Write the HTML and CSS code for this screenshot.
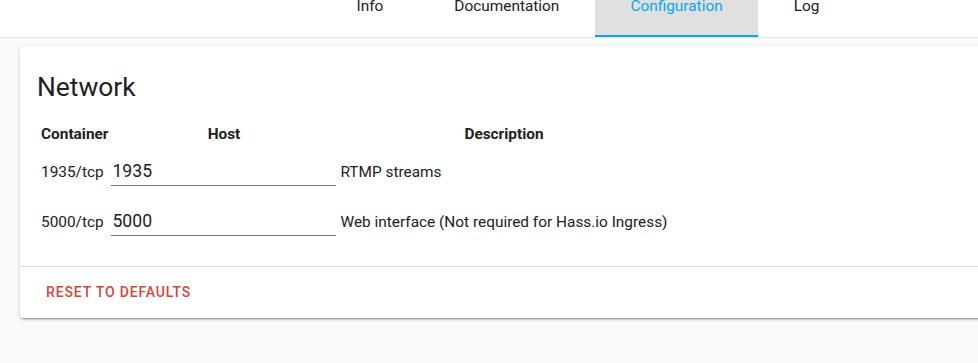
FILE: index.html
```html
<!DOCTYPE html>
<html lang="en">
<head>
  <meta charset="UTF-8">
  <meta name="viewport" content="width=device-width, initial-scale=1.0">
  <title>Add-on Configuration</title>
  <link rel="stylesheet" href="styles.css">
</head>
<body>
<header class="toolbar">
  <nav class="tabs">
    <a class="tab">Info</a>
    <a class="tab">Documentation</a>
    <a class="tab active">Configuration</a>
    <a class="tab">Log</a>
  </nav>
</header>

<main class="content">
  <div class="card">
    <h1 class="card-header">Network</h1>

    <div class="card-content">
      <table class="ports">
        <thead>
          <tr>
            <th>Container</th>
            <th>Host</th>
            <th>Description</th>
          </tr>
        </thead>
        <tbody>
          <tr>
            <td>1935/tcp</td>
            <td class="host"><input type="text" value="1935"></td>
            <td>RTMP streams</td>
          </tr>
          <tr>
            <td>5000/tcp</td>
            <td class="host"><input type="text" value="5000"></td>
            <td>Web interface (Not required for Hass.io Ingress)</td>
          </tr>
        </tbody>
      </table>
    </div>

    <div class="card-actions">
      <button class="warning">Reset to defaults</button>
    </div>
  </div>
</main>
</body>
</html>
```

FILE: styles.css
```css
html, body {
  margin: 0;
  padding: 0;
  overflow: hidden;
}

body {
  font-family: Roboto, "Noto Sans", sans-serif;
  background-color: #fafafa;
  color: #212121;
  -webkit-font-smoothing: antialiased;
}

.toolbar {
  height: 37px;
  background-color: white;
  border-bottom: 1px solid #e0e0e0;
}

.tabs {
  display: flex;
  height: 100%;
  margin-left: 321px;
}

.tab {
  box-sizing: border-box;
  height: 37px;
  padding: 0 35.5px;
  font-size: 15.4px;
  line-height: 12px;
  color: #212121;
  border-bottom: 2px solid transparent;
  cursor: pointer;
}

.tab.active {
  background-color: #e0e0e0;
  color: #03a9f4;
  border-bottom-color: #03a9f4;
}

.content {
  padding: 8px 0 40px 20px;
}

.card {
  width: 1000px;
  background-color: white;
  border-radius: 4px;
  box-shadow: 0 2px 2px 0 rgba(0,0,0,0.14), 0 1px 5px 0 rgba(0,0,0,0.12), 0 3px 1px -2px rgba(0,0,0,0.2);
}

.card-header {
  margin: 0;
  padding: 25px 17px 0;
  font-size: 26.4px;
  font-weight: 400;
  line-height: 32px;
  color: #212121;
}

.card-content {
  padding: 22px 16px 17px;
}

.ports {
  border-spacing: 0;
  font-size: 15.4px;
}

.ports th {
  padding: 0 4px 6px;
  font-weight: 700;
  line-height: 18px;
  text-align: center;
}

.ports th:first-child {
  padding-left: 5px;
  padding-right: 3px;
}

.ports tr {
  vertical-align: baseline;
}

.ports td {
  padding: 12px 4px 13px;
}

.ports td:first-child {
  padding-left: 5px;
  padding-right: 3px;
}

.ports td.host {
  padding-left: 0;
  padding-right: 0;
}

.ports input {
  display: block;
  box-sizing: border-box;
  width: 225px;
  height: 25px;
  margin: 0;
  padding: 0 0 4px 1px;
  border: none;
  border-bottom: 1px solid #757575;
  font-family: inherit;
  font-size: 17.6px;
  line-height: 20px;
  color: #212121;
  background: transparent;
  outline: none;
}

.card-actions {
  padding: 7px 16px 8px;
  border-top: 1px solid #e0e0e0;
}

button.warning {
  height: 36px;
  padding: 0 10px;
  border: none;
  background: none;
  font-family: inherit;
  font-size: 14px;
  font-weight: 500;
  letter-spacing: 0.85px;
  line-height: 36px;
  text-transform: uppercase;
  color: #db4437;
  cursor: pointer;
}
```
